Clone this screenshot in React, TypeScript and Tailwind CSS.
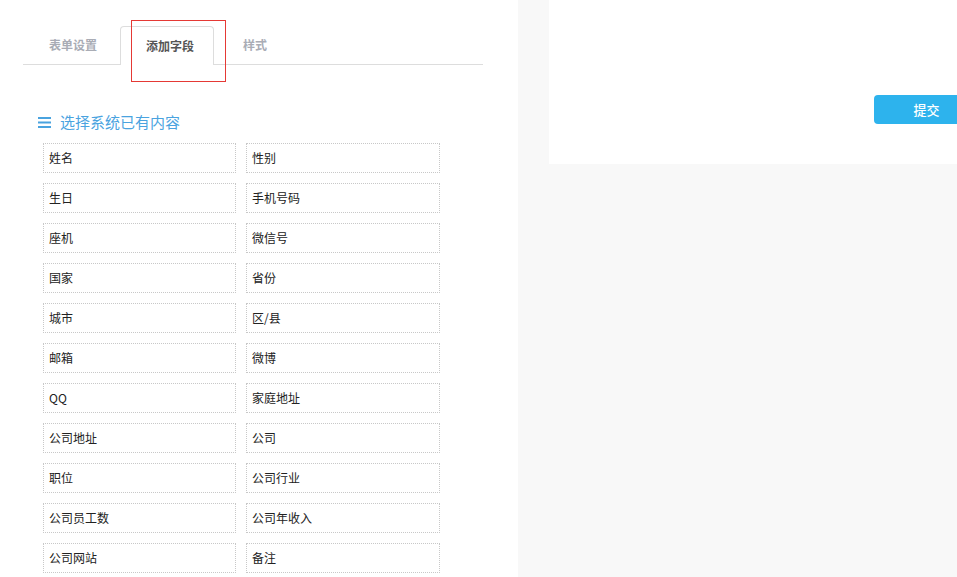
const fields = [
  ["姓名", "性别"],
  ["生日", "手机号码"],
  ["座机", "微信号"],
  ["国家", "省份"],
  ["城市", "区/县"],
  ["邮箱", "微博"],
  ["QQ", "家庭地址"],
  ["公司地址", "公司"],
  ["职位", "公司行业"],
  ["公司员工数", "公司年收入"],
  ["公司网站", "备注"],
];

export default function App() {
  return (
    <div
      className="flex w-[957px] h-[577px] overflow-hidden bg-[#f8f8f8]"
      style={{ fontFamily: '"Microsoft YaHei", "Noto Sans CJK SC", "Noto Sans", sans-serif' }}
    >
      {/* Left editor panel */}
      <div className="relative w-[518px] h-full bg-white shrink-0">
        {/* Tabs */}
        <div className="ml-[23px] mt-[26px] w-[460px] flex border-b border-[#dddddd] h-[39px]">
          <div className="ml-[3px] w-[94px] h-[38px] flex items-center justify-center text-[12px] font-bold text-[#a9acb5]">
            表单设置
          </div>
          <div className="w-[94px] h-[39px] -mb-px pl-[6px] flex items-center justify-center text-[12px] font-bold text-[#555555] bg-white border border-b-0 border-[#dddddd] rounded-t-[4px]">
            添加字段
          </div>
          <div className="w-[82px] h-[38px] flex items-center justify-center text-[12px] font-bold text-[#a9acb5]">
            样式
          </div>
        </div>

        {/* highlight outline */}
        <div className="absolute left-[131px] top-[20px] w-[95px] h-[62px] border border-[#e53935] pointer-events-none" />

        {/* Section header */}
        <div className="mt-[47px] ml-[38px] flex items-center gap-[9px] h-[20px]">
          <svg width="13" height="11" viewBox="0 0 13 11">
            <rect x="0" y="0" width="13" height="2" fill="#4aa3df" />
            <rect x="0" y="4.5" width="13" height="2" fill="#4aa3df" />
            <rect x="0" y="9" width="13" height="2" fill="#4aa3df" />
          </svg>
          <span className="text-[15px] text-[#4aa3df]">选择系统已有内容</span>
        </div>

        {/* Field grid */}
        <div className="ml-[43px] mt-[11px] grid grid-cols-[193px_194px] gap-x-[10px] gap-y-[10px]">
          {fields.flat().map((f) => (
            <div
              key={f}
              className="h-[30px] border border-dotted border-[#c8c8c8] flex items-center pl-[5px] text-[12px] text-[#222222]"
            >
              {f}
            </div>
          ))}
        </div>
      </div>

      {/* Right preview panel */}
      <div className="ml-[31px] flex-1 h-[164px] bg-white overflow-hidden">
        <div className="pt-[95px] pl-[325px]">
          <button className="w-[105px] h-[29px] rounded-[4px] bg-[#2db3ed] text-white text-[13px] font-medium flex items-center justify-center">
            提交
          </button>
        </div>
      </div>
    </div>
  );
}
